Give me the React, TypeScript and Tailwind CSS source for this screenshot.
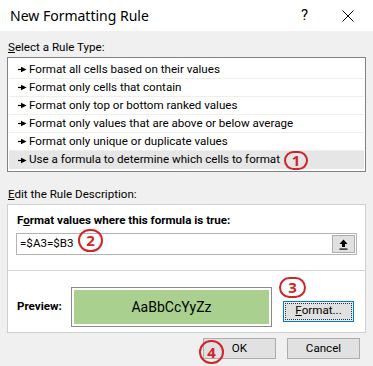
import React from "react"

const rules = [
  "Format all cells based on their values",
  "Format only cells that contain",
  "Format only top or bottom ranked values",
  "Format only values that are above or below average",
  "Format only unique or duplicate values",
  "Use a formula to determine which cells to format",
]

function Arrow() {
  return (
    <svg width="9" height="7" viewBox="0 0 9 7" className="shrink-0">
      <line x1="0" y1="3.5" x2="4" y2="3.5" stroke="#000" strokeWidth="1.2" />
      <path d="M3 0.8 L8.6 3.5 L3 6.2 Z" fill="#000" />
    </svg>
  )
}

function Badge({ n, className }: { n: string; className: string }) {
  return (
    <span
      className={
        "absolute flex items-center justify-center rounded-full border-[2.5px] border-[#d3232a] font-['Noto_Sans',sans-serif] text-[15px] font-bold leading-none text-[#d3232a] " +
        className
      }
    >
      {n}
    </span>
  )
}

export default function App() {
  return (
    <div className="relative h-[366px] w-[373px] overflow-hidden bg-[#f0f0f0] font-['Roboto',sans-serif] text-[11.6px] text-black">
      {/* title bar */}
      <div className="flex h-[31px] items-center bg-white pl-[10px]">
        <span className="font-['Noto_Sans',sans-serif] text-[14px]">New Formatting Rule</span>
        <span className="ml-auto mr-[34px] text-[15px]">?</span>
        <svg width="12" height="12" viewBox="0 0 12 12" className="mr-[19px]">
          <path d="M0.5 0.5 L11.5 11.5 M11.5 0.5 L0.5 11.5" stroke="#000" strokeWidth="1" />
        </svg>
      </div>

      <div className="pl-[8px] pt-[8px] leading-[16px]">
        <span className="underline">S</span>elect a Rule Type:
      </div>

      {/* rule list */}
      <div className="mx-[7px] mt-[2px] h-[115px] border border-[#828282] bg-white px-[1px] pt-[3px]">
        {rules.map((r, i) => (
          <div
            key={r}
            className={
              "flex h-[18px] items-center gap-[2px] pl-[9px] " +
              (i === 5 ? "bg-[#e6e6e6]" : "border-b border-[#eeeeee]")
            }
          >
            <Arrow />
            <span className="whitespace-nowrap">{r}</span>
          </div>
        ))}
      </div>

      <div className="pl-[8px] pt-[14px] leading-[16px]">
        <span className="underline">E</span>dit the Rule Description:
      </div>

      {/* description box */}
      <div className="mx-[7px] mt-[2px] h-[129px] border border-[#cfcfcf] bg-white">
        <div className="pl-[9px] pt-[7px] font-bold leading-[16px]">
          F<span className="underline">o</span>rmat values where this formula is true:
        </div>
        <div className="mx-[8px] mt-[5px] flex h-[22px] items-center border border-[#b4b4b4] pl-[3px]">
          <span>=$A3=$B3</span>
          <div className="ml-auto mr-[1px] flex h-[18px] w-[23px] items-center justify-center border border-[#adadad] bg-[#e1e1e1]">
            <svg width="9" height="11" viewBox="0 0 9 11">
              <path d="M4.5 0.5 L8.5 5 L6 5 L6 8 L3 8 L3 5 L0.5 5 Z" fill="#000" />
              <rect x="0.5" y="9.5" width="8" height="1.2" fill="#000" />
            </svg>
          </div>
        </div>
        <div className="mt-[15px] h-px bg-[#d6d6d6]" />
        <div className="mt-[16px] flex items-center">
          <span className="w-[63px] pl-[9px] font-bold">Preview:</span>
          <div className="h-[40px] w-[201px] border border-[#8a8a8a] bg-white p-[2px]">
            <div className="flex h-full items-center justify-center bg-[#a9d08e] text-[14px]">AaBbCcYyZz</div>
          </div>
          <div className="ml-[11px] mt-[8px] flex h-[21px] w-[71px] items-center justify-center border border-[#0078d7] bg-[#e5f1fb]">
            <div className="flex h-[17px] w-[67px] items-center justify-center border border-dotted border-[#333] bg-[#e1e1e1]">
              <span className="underline">F</span>ormat...
            </div>
          </div>
        </div>
      </div>

      {/* buttons */}
      <div className="mt-[5px] flex gap-[11px] pl-[203px]">
        <div className="flex h-[21px] w-[73px] items-center justify-center border border-[#adadad] bg-[#e1e1e1]">OK</div>
        <div className="flex h-[21px] w-[73px] items-center justify-center border border-[#adadad] bg-[#e1e1e1]">Cancel</div>
      </div>

      <Badge n="1" className="left-[284px] top-[151px] h-[19px] w-[24px]" />
      <Badge n="2" className="left-[78px] top-[229px] h-[23px] w-[25px]" />
      <Badge n="3" className="left-[279px] top-[277px] h-[21px] w-[27px]" />
      <Badge n="4" className="left-[199px] top-[340px] h-[24px] w-[25px]" />
    </div>
  )
}
